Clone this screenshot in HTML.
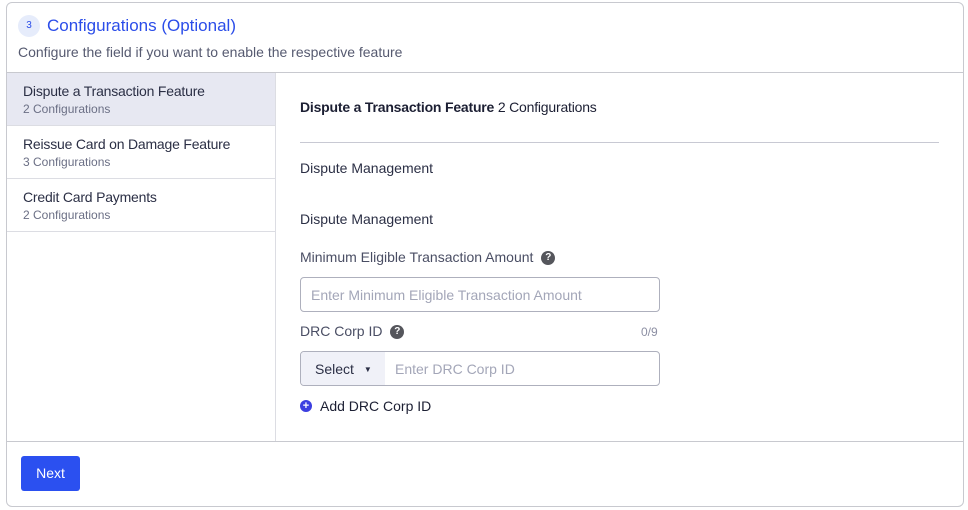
<!DOCTYPE html>
<html><head><meta charset="utf-8"><style>
*{box-sizing:border-box;margin:0;padding:0}
body{width:968px;height:510px;background:#fff;font-family:"Liberation Sans",sans-serif;position:relative;overflow:hidden;color:#2b2f45}
.a{position:absolute;white-space:nowrap}
.card{position:absolute;left:6px;top:2px;width:958px;height:505px;border:1px solid #c8c9cf;border-radius:6px}
.side div.it{position:absolute;left:7px;width:268px;height:53px;border-bottom:1px solid #dcdde3}
.it .t{position:absolute;left:16px;top:10px;font-size:14px;letter-spacing:-0.2px;color:#2b2f45}
.it .s{position:absolute;left:16px;top:29px;font-size:12px;color:#6b6f85}
.q{display:inline-block;width:14px;height:14px;border-radius:50%;background:#55565c;color:#fff;font-size:10px;font-weight:bold;text-align:center;line-height:14px;vertical-align:middle}
</style></head><body>
<div class="card"></div>
<div class="a" style="left:18px;top:15px;width:22px;height:22px;border-radius:50%;background:#e6ecfb;color:#2b4de9;font-size:10px;text-align:center;line-height:22px">3</div>
<div class="a" style="left:47px;top:16px;font-size:17px;color:#2b4de9">Configurations (Optional)</div>
<div class="a" style="left:18px;top:44px;font-size:14px;color:#565a70">Configure the field if you want to enable the respective feature</div>
<div class="a" style="left:7px;top:72px;width:956px;height:1px;background:#c8c9cf"></div>
<div class="a" style="left:275px;top:73px;width:1px;height:368px;background:#dcdde3"></div>
<div class="a" style="left:7px;top:441px;width:956px;height:1px;background:#c8c9cf"></div>
<div class="side">
<div class="it" style="top:73px;background:#e7e8f2"><span class="a t">Dispute a Transaction Feature</span><span class="a s">2 Configurations</span></div>
<div class="it" style="top:126px"><span class="a t">Reissue Card on Damage Feature</span><span class="a s">3 Configurations</span></div>
<div class="it" style="top:179px"><span class="a t">Credit Card Payments</span><span class="a s">2 Configurations</span></div>
</div>
<div class="a" style="left:300px;top:99px;font-size:14px;color:#1c1f33;letter-spacing:-0.2px"><b>Dispute a Transaction Feature</b> 2 Configurations</div>
<div class="a" style="left:300px;top:142px;width:639px;height:1px;background:#c8c9d3"></div>
<div class="a" style="left:300px;top:160px;font-size:14px">Dispute Management</div>
<div class="a" style="left:300px;top:211px;font-size:14px">Dispute Management</div>
<div class="a" style="left:300px;top:249px;font-size:14px;color:#4a4e64">Minimum Eligible Transaction Amount <span class="q" style="margin-left:4px">?</span></div>
<div class="a" style="left:300px;top:277px;width:360px;height:35px;border:1px solid #aeb0bd;border-radius:4px;font-size:14px;color:#a3a6b8;padding:9px 0 0 10px">Enter Minimum Eligible Transaction Amount</div>
<div class="a" style="left:300px;top:323px;font-size:14px;color:#4a4e64">DRC Corp ID <span class="q" style="margin-left:4px">?</span></div>
<div class="a" style="left:641px;top:325px;font-size:12px;color:#8c8fa3">0/9</div>
<div class="a" style="left:300px;top:351px;width:360px;height:35px;border:1px solid #aeb0bd;border-radius:4px;overflow:hidden">
<div class="a" style="left:0;top:0;width:84px;height:33px;background:#f0f1f8;font-size:14px;color:#2b2f45;padding:9px 0 0 14px">Select <span style="font-size:8px;margin-left:6px;vertical-align:2px">▼</span></div>
<div class="a" style="left:94px;top:9px;font-size:14px;color:#a3a6b8">Enter DRC Corp ID</div>
</div>
<div class="a" style="left:300px;top:400px;width:12px;height:12px;border-radius:50%;background:#3c3fe0;color:#fff;font-size:11px;font-weight:bold;text-align:center;line-height:12px">+</div>
<div class="a" style="left:320px;top:398px;font-size:14px;color:#1c1f33">Add DRC Corp ID</div>
<div class="a" style="left:21px;top:456px;width:59px;height:35px;background:#2b50f0;border-radius:3px;color:#fff;font-size:14px;text-align:center;line-height:35px">Next</div>
</body></html>
